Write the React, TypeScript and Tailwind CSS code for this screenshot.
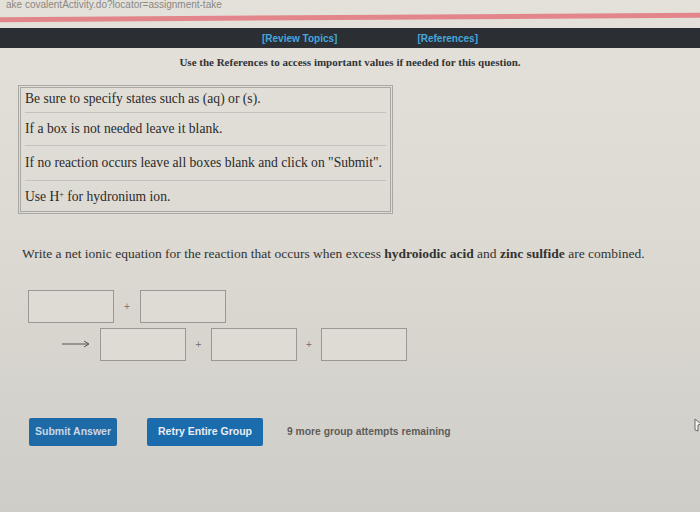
export default function App() {
  const box = "h-[33px] w-[86px] border border-[#9a9893] bg-[#dedbd4]";
  return (
    <div className="relative h-[512px] w-[700px] overflow-hidden bg-gradient-to-b from-[#e4e1da] via-[#dcd9d2] to-[#cfcdc8] font-['Liberation_Serif',serif] text-[#2a2a2a]">
      {/* url remnant */}
      <div className="h-[12px] pl-[6px] font-['Liberation_Sans',sans-serif] text-[10px] leading-[10px] text-[#8a8884]">
        ake covalentActivity.do?locator=assignment-take
      </div>
      <div className="mt-[3px] h-[5px] w-full -rotate-[0.35deg] bg-[#e3868b]" />
      <div className="h-[8px]" />

      {/* dark header */}
      <div className="flex h-[20px] items-center bg-[#2b2e33] font-['Liberation_Sans',sans-serif] text-[10px] font-bold text-[#44a7dd]">
        <span className="ml-[262px]">[Review Topics]</span>
        <span className="ml-[80px]">[References]</span>
      </div>
      <p className="mt-[6px] text-center text-[11px] font-bold text-[#333]">
        Use the References to access important values if needed for this question.
      </p>

      {/* instructions */}
      <div className="ml-[18px] mt-[14px] w-[375px] border-[3px] border-double border-[#a9a7a2] px-[4px] py-[3px] text-[13.6px]">
        <div className="border-b border-[#c4c2bc] pb-[5px] leading-[16px]">Be sure to specify states such as (aq) or (s).</div>
        <div className="border-b border-[#c4c2bc] py-[8px] leading-[16px]">If a box is not needed leave it blank.</div>
        <div className="border-b border-[#c4c2bc] py-[9px] leading-[16px]">
          If no reaction occurs leave all boxes blank and click on "Submit".
        </div>
        <div className="pb-[3px] pt-[8px] leading-[16px]">
          Use H<sup className="text-[8px]">+</sup> for hydronium ion.
        </div>
      </div>

      <p className="ml-[22px] mt-[30px] text-[13.5px] text-[#333]">
        Write a net ionic equation for the reaction that occurs when excess{" "}
        <b>hydroiodic acid</b> and <b>zinc sulfide</b> are combined.
      </p>

      {/* equation boxes */}
      <div className="ml-[28px] mt-[26px] flex items-center">
        <div className={box} />
        <span className="w-[26px] text-center font-['Liberation_Sans',sans-serif] text-[10px] text-[#777]">+</span>
        <div className={box} />
      </div>
      <div className="ml-[62px] mt-[5px] flex items-center">
        <svg width="28" height="8" viewBox="0 0 28 8" className="mr-[10px]">
          <line x1="0" y1="4" x2="26" y2="4" stroke="#555" strokeWidth="1" />
          <path d="M22 1 L27 4 L22 7" fill="none" stroke="#555" strokeWidth="1" />
        </svg>
        <div className={box} />
        <span className="w-[25px] text-center font-['Liberation_Sans',sans-serif] text-[10px] text-[#777]">+</span>
        <div className={box} />
        <span className="w-[24px] text-center font-['Liberation_Sans',sans-serif] text-[10px] text-[#777]">+</span>
        <div className={box} />
      </div>

      {/* buttons */}
      <div className="ml-[29px] mt-[57px] flex items-center font-['Liberation_Sans',sans-serif] text-[10.5px] font-bold">
        <button className="h-[28px] w-[88px] rounded-[2px] bg-[#1d6aa6] text-[#c9d8e6]">Submit Answer</button>
        <button className="ml-[30px] h-[28px] w-[116px] rounded-[2px] bg-[#1b6cad] text-[#e8eef4]">Retry Entire Group</button>
        <span className="ml-[24px] text-[10.3px] text-[#5e5d5a]">9 more group attempts remaining</span>
      </div>

      {/* cursor at right edge */}
      <svg className="absolute left-[694px] top-[418px]" width="8" height="14" viewBox="0 0 8 14">
        <path d="M1 1 L7 6 L4 7 L4 13 L1 12 Z" fill="#f2f2f0" stroke="#6a6a6a" strokeWidth="1" />
      </svg>
    </div>
  );
}
